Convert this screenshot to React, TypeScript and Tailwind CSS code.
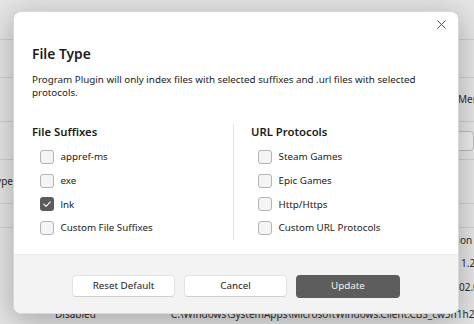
import React from "react";

const font = { fontFamily: '"Noto Sans", "Open Sans", sans-serif' };

function Check({ checked }: { checked?: boolean }) {
  if (checked) {
    return (
      <span className="flex h-[14px] w-[14px] shrink-0 items-center justify-center rounded-[3px] bg-[#5b5b5b]">
        <svg width="10" height="10" viewBox="0 0 10 10" fill="none">
          <path d="M1.8 5.2 L4 7.3 L8.3 2.8" stroke="#ffffff" strokeWidth="1.1" strokeLinecap="round" strokeLinejoin="round" />
        </svg>
      </span>
    );
  }
  return <span className="h-[14px] w-[14px] shrink-0 rounded-[3px] border border-[#b4b4b4] bg-[#f4f4f4]" />;
}

function Row({ label, checked }: { label: string; checked?: boolean }) {
  return (
    <div className="flex h-[23.7px] items-center gap-[6.5px]">
      <Check checked={checked} />
      <span className="text-[9.8px] leading-[13px] text-[#1b1b1b]">{label}</span>
    </div>
  );
}

export default function App() {
  return (
    <div className="relative h-[324px] w-[474px] overflow-hidden bg-[#e4e4e4]" style={font}>
      {/* dimmed app behind the dialog */}
      <div className="flex flex-col text-[10px] text-[#2b2b2b]">
        <div className="h-[40px] border-b border-[#cdcdcd]" />
        <div className="h-[38px] border-b border-[#cdcdcd]" />
        <div className="flex h-[44px] items-center border-b border-[#cdcdcd] pl-[458px] whitespace-nowrap">Menu</div>
        <div className="flex h-[38px] items-center border-b border-[#cdcdcd] pl-[440px]">
          <div className="h-[20px] w-[60px] rounded-[4px] border border-[#bdbdbd] bg-[#ececec]" />
        </div>
        <div className="flex h-[44px] items-center border-b border-[#cdcdcd]">
          <div className="flex w-[13px] justify-end overflow-hidden whitespace-nowrap">Type</div>
        </div>
        <div className="h-[24px] border-b border-[#cdcdcd]" />
        <div className="flex h-[24px] items-center pl-[437px] whitespace-nowrap">Version</div>
        <div className="flex h-[23.5px] items-center pl-[461px] whitespace-nowrap">1.2.0</div>
        <div className="flex h-[23.5px] items-center pl-[459px] whitespace-nowrap">02.0</div>
        <div className="flex h-[24px] items-center whitespace-nowrap pt-[6px]">
          <span className="pl-[55px]">Disabled</span>
          <span className="pl-[75px]">C:\Windows\SystemApps\MicrosoftWindows.Client.CBS_cw5n1h2txyewy</span>
        </div>
      </div>

      {/* dialog */}
      <div className="absolute left-[13px] top-[11px] flex h-[303px] w-[446px] flex-col overflow-hidden rounded-[8px] border border-[#d9d9d9] bg-white shadow-[0_6px_28px_rgba(0,0,0,0.28)]">
        <button className="absolute right-[9px] top-[4px] flex h-[16px] w-[16px] items-center justify-center">
          <svg width="9" height="9" viewBox="0 0 9 9" fill="none">
            <path d="M0.7 0.7 L8.3 8.3 M8.3 0.7 L0.7 8.3" stroke="#404040" strokeWidth="0.9" strokeLinecap="round" />
          </svg>
        </button>

        <div className="flex-1 px-[18px] pt-[31px]">
          <div className="text-[13.8px] font-semibold leading-[22px] text-[#1b1b1b]">File Type</div>
          <p className="mt-[8px] text-[9.8px] leading-[13px] text-[#1b1b1b]">
            Program Plugin will only index files with selected suffixes and .url files with selected protocols.
          </p>
          <div className="mt-[25px] grid grid-cols-[201px_1fr]">
            <div>
              <div className="text-[11.3px] font-semibold leading-[16px] text-[#1b1b1b]">File Suffixes</div>
              <div className="mt-[5px] flex flex-col pl-[8px]">
                <Row label="appref-ms" />
                <Row label="exe" />
                <Row label="lnk" checked />
                <Row label="Custom File Suffixes" />
              </div>
            </div>
            <div className="border-l border-[#e6e6e6] pl-[17px]">
              <div className="text-[11.3px] font-semibold leading-[16px] text-[#1b1b1b]">URL Protocols</div>
              <div className="mt-[5px] flex flex-col pl-[7px]">
                <Row label="Steam Games" />
                <Row label="Epic Games" />
                <Row label="Http/Https" />
                <Row label="Custom URL Protocols" />
              </div>
            </div>
          </div>
        </div>

        <div className="flex h-[59px] justify-center gap-[9px] border-t border-[#ececec] bg-[#f3f3f3] pt-[20px]">
          <button className="h-[22px] w-[103px] rounded-[4px] border border-[#e2e2e2] border-b-[#d0d0d0] bg-white text-[9.8px] text-[#1b1b1b]">
            Reset Default
          </button>
          <button className="h-[22px] w-[103px] rounded-[4px] border border-[#e2e2e2] border-b-[#d0d0d0] bg-white text-[9.8px] text-[#1b1b1b]">
            Cancel
          </button>
          <button className="h-[23px] w-[104px] rounded-[4px] bg-[#5d5d5d] text-[9.8px] text-[#f2f2f2]">
            Update
          </button>
        </div>
      </div>
    </div>
  );
}
